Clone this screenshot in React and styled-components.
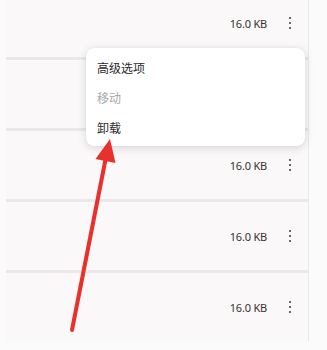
import React from "react";
import styled, { createGlobalStyle } from "styled-components";

const GlobalStyle = createGlobalStyle`
  html, body {
    margin: 0;
    padding: 0;
    background: #ffffff;
  }
  body {
    font-family: "Noto Sans", "Noto Sans CJK SC", sans-serif;
  }
`;

const Page = styled.div`
  position: relative;
  width: 327px;
  height: 350px;
  overflow: hidden;
  background: #fcfbfb;
`;

const FileList = styled.div`
  display: flex;
  flex-direction: column;
  gap: 3px;
  width: 302px;
  margin: -11px 0 0 6px;
  background: #ebe8ea;
  border-right: 1px solid #ebe8ea;
`;

const FileRow = styled.div`
  height: 68px;
  display: flex;
  align-items: center;
  justify-content: flex-end;
  gap: 15px;
  padding-right: 10px;
  background: #faf8f9;
`;

const Size = styled.span`
  font-size: 11px;
  color: #333333;
  letter-spacing: -0.2px;
`;

const Kebab = styled.button`
  width: 16px;
  height: 20px;
  border: none;
  background: none;
  padding: 0;
  display: flex;
  flex-direction: column;
  align-items: center;
  justify-content: center;
  gap: 2.5px;
  cursor: pointer;

  & > i {
    width: 2.5px;
    height: 2.5px;
    border-radius: 50%;
    background: #3a3a3a;
  }
`;

const Menu = styled.ul`
  position: absolute;
  left: 86px;
  top: 48px;
  width: 219px;
  margin: 0;
  padding: 4px 0;
  list-style: none;
  background: #ffffff;
  border-radius: 8px;
  box-shadow: 0 2px 10px rgba(0, 0, 0, 0.14), 0 0 1px rgba(0, 0, 0, 0.12);
`;

const MenuItem = styled.li`
  height: 30px;
  display: flex;
  align-items: center;
  padding-left: 11px;
  font-family: "Noto Sans CJK SC", sans-serif;
  font-size: 12px;
  color: ${(p) => (p.disabled ? "#a9a7a8" : "#2b2b2b")};
`;

const Annotation = styled.svg`
  position: absolute;
  left: 0;
  top: 0;
  pointer-events: none;
`;

const sizes = ["16.0 KB", "", "16.0 KB", "16.0 KB", "16.0 KB"];

const App = () => {
  return (
    <Page>
      <GlobalStyle />
      <FileList>
        {sizes.map((s, i) => (
          <FileRow key={i}>
            <Size>{s}</Size>
            <Kebab aria-label="更多">
              <i />
              <i />
              <i />
            </Kebab>
          </FileRow>
        ))}
      </FileList>
      <Menu>
        <MenuItem>高级选项</MenuItem>
        <MenuItem disabled>移动</MenuItem>
        <MenuItem>卸载</MenuItem>
      </Menu>
      <Annotation width="327" height="350" viewBox="0 0 327 350">
        <line
          x1="72"
          y1="330"
          x2="106"
          y2="157"
          stroke="#e8302c"
          strokeWidth="4"
          strokeLinecap="round"
        />
        <polygon points="110,139 95.5,159 115.5,163" fill="#e8302c" />
      </Annotation>
    </Page>
  );
};

export default App;
